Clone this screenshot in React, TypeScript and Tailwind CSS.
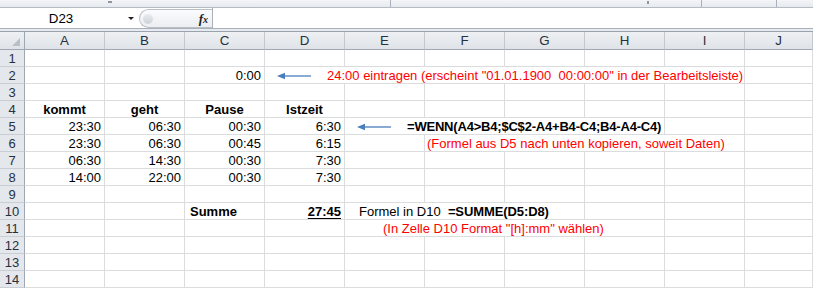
import React from "react";

const cols = ["A", "B", "C", "D", "E", "F", "G", "H", "I", "J"];

function Arrow({ className }: { className?: string }) {
  return (
    <svg width="34" height="8" viewBox="0 0 34 8" className={className}>
      <line x1="6" y1="4" x2="34" y2="4" stroke="#4a7ebb" strokeWidth="1.3" />
      <polygon points="0,4 8,0.8 8,7.2" fill="#4a7ebb" />
    </svg>
  );
}

type CellProps = {
  span?: number;
  align?: "left" | "right" | "center";
  className?: string;
  children?: React.ReactNode;
};

function Cell({ span = 1, align = "left", className = "", children }: CellProps) {
  const spanCls =
    span === 6 ? "col-span-6" : span === 4 ? "col-span-4" : span === 3 ? "col-span-3" : "col-span-1";
  const alignCls =
    align === "right" ? "justify-end pr-[3px]" : align === "center" ? "justify-center" : "justify-start";
  return (
    <div
      className={`${spanCls} ${alignCls} flex h-[17px] items-start whitespace-pre border-b border-r border-[#dadcdd] text-[13px] leading-[18px] ${className}`}
    >
      {children}
    </div>
  );
}

function RowHead({ n }: { n: number }) {
  return (
    <div className="flex h-[17px] justify-center border-b border-r border-b-[#c9ced5] border-r-[#9ea7b2] bg-[#e4e7eb] text-[13px] leading-[18px] text-[#27313d]">
      {n}
    </div>
  );
}

function Empty({ count }: { count: number }) {
  return (
    <>
      {Array.from({ length: count }).map((_, i) => (
        <Cell key={i} />
      ))}
    </>
  );
}

export default function App() {
  return (
    <div className="h-[290px] w-[816px] overflow-hidden bg-white font-['Liberation_Sans',Arial,sans-serif] text-black">
      {/* ribbon bottom strip */}
      <div className="flex h-[8px] w-[813px] border-b border-[#b4bbc5] bg-gradient-to-b from-[#f3f5f8] to-[#e6e9ee]">
        <div className="w-[108px]" />
        <div className="mt-[1px] h-[2px] w-[4px] bg-[#8d96a1]" />
        <div className="w-[278px]" />
        <div className="h-[7px] w-[1px] bg-[#aab1ba]" />
        <div className="w-[256px]" />
        <div className="mt-[1px] h-[3px] w-[2px] bg-[#8d96a1]" />
        <div className="w-[52px]" />
        <div className="h-[7px] w-[1px] bg-[#aab1ba]" />
        <div className="w-[74px]" />
        <div className="h-[7px] w-[1px] bg-[#aab1ba]" />
      </div>

      {/* formula bar */}
      <div className="flex h-[21px] w-[813px] border-b border-[#a9b0b9] bg-white">
        <div className="w-[122px] text-center text-[13.33px] leading-[21px] text-black">D23</div>
        <div className="flex w-[17px] items-center justify-start pl-[6px]">
          <div className="h-0 w-0 border-x-[3px] border-t-[3px] border-x-transparent border-t-[#222]" />
        </div>
        <div className="mt-[1px] flex h-[19px] w-[73px] items-center rounded-l-full border-y border-l border-[#b9bfc7] bg-gradient-to-b from-[#fbfbfc] to-[#eceef1]">
          <div className="ml-[3px] h-[10px] w-[10px] rounded-full bg-gradient-to-b from-[#e9ebee] to-[#cfd3d8]" />
          <div className="flex-1" />
          <span className="mr-[4px] font-['Liberation_Serif',serif] text-[13px] font-bold italic leading-none text-[#222]">
            f<span className="text-[10px]">x</span>
          </span>
        </div>
        <div className="flex-1 border-l border-[#a9b0b9] bg-white" />
      </div>
      <div className="h-[3px] w-[813px] border-b border-[#9aa3ad] bg-[#e8ebef]" />

      {/* sheet */}
      <div className="grid w-[813px] grid-cols-[25px_repeat(9,80px)_1fr]">
        {/* header row */}
        <div className="relative h-[18px] border-b border-r border-b-[#9ea7b2] border-r-[#9ea7b2] bg-gradient-to-b from-[#eef0f3] to-[#dfe3e8]">
          <div className="absolute bottom-[3px] right-[4px] h-0 w-0 border-b-[8px] border-l-[8px] border-b-[#b9bfc6] border-l-transparent" />
        </div>
        {cols.map((c) => (
          <div
            key={c}
            className="flex h-[18px] justify-center border-b border-r border-b-[#9ea7b2] border-r-[#c2c8cf] bg-gradient-to-b from-[#eef0f3] to-[#dfe3e8] text-[13.33px] leading-[18px] text-[#27313d]"
          >
            {c}
          </div>
        ))}

        {/* row 1 */}
        <RowHead n={1} />
        <Empty count={10} />

        {/* row 2 */}
        <RowHead n={2} />
        <Cell />
        <Cell />
        <Cell align="right">0:00</Cell>
        <Cell span={6}>
          <Arrow className="ml-[12px] mt-[5px] shrink-0" />
          <span className="ml-[16px] text-[#ff0000]">
            24:00 eintragen (erscheint "01.01.1900  00:00:00" in der Bearbeitsleiste)
          </span>
        </Cell>
        <Cell />

        {/* row 3 */}
        <RowHead n={3} />
        <Empty count={10} />

        {/* row 4 */}
        <RowHead n={4} />
        <Cell align="center">
          <span className="font-bold">kommt</span>
        </Cell>
        <Cell align="center">
          <span className="font-bold">geht</span>
        </Cell>
        <Cell align="center">
          <span className="font-bold">Pause</span>
        </Cell>
        <Cell align="center">
          <span className="font-bold">Istzeit</span>
        </Cell>
        <Empty count={6} />

        {/* row 5 */}
        <RowHead n={5} />
        <Cell align="right">23:30</Cell>
        <Cell align="right">06:30</Cell>
        <Cell align="right">00:30</Cell>
        <Cell align="right">6:30</Cell>
        <Cell span={4}>
          <Arrow className="ml-[12px] mt-[5px] shrink-0" />
          <span className="ml-[16px] font-bold tracking-[-0.2px]">=WENN(A4&gt;B4;$C$2-A4+B4-C4;B4-A4-C4)</span>
        </Cell>
        <Cell />
        <Cell />

        {/* row 6 */}
        <RowHead n={6} />
        <Cell align="right">23:30</Cell>
        <Cell align="right">06:30</Cell>
        <Cell align="right">00:45</Cell>
        <Cell align="right">6:15</Cell>
        <Cell />
        <Cell span={4}>
          <span className="pl-[2px] text-[#ff0000]">(Formel aus D5 nach unten kopieren, soweit Daten)</span>
        </Cell>
        <Cell />

        {/* row 7 */}
        <RowHead n={7} />
        <Cell align="right">06:30</Cell>
        <Cell align="right">14:30</Cell>
        <Cell align="right">00:30</Cell>
        <Cell align="right">7:30</Cell>
        <Empty count={6} />

        {/* row 8 */}
        <RowHead n={8} />
        <Cell align="right">14:00</Cell>
        <Cell align="right">22:00</Cell>
        <Cell align="right">00:30</Cell>
        <Cell align="right">7:30</Cell>
        <Empty count={6} />

        {/* row 9 */}
        <RowHead n={9} />
        <Empty count={10} />

        {/* row 10 */}
        <RowHead n={10} />
        <Cell />
        <Cell />
        <Cell>
          <span className="pl-[5px] font-bold">Summe</span>
        </Cell>
        <Cell align="right">
          <span className="font-bold underline underline-offset-2">27:45</span>
        </Cell>
        <Cell span={3}>
          <span className="pl-[14px]">
            {"Formel in D10  "}
            <span className="font-bold tracking-[-0.1px]">=SUMME(D5:D8)</span>
          </span>
        </Cell>
        <Empty count={3} />

        {/* row 11 */}
        <RowHead n={11} />
        <Empty count={4} />
        <Cell span={4}>
          <span className="pl-[38px] text-[#ff0000]">(In Zelle D10 Format "[h]:mm" wählen)</span>
        </Cell>
        <Empty count={2} />

        {/* rows 12-14 */}
        <RowHead n={12} />
        <Empty count={10} />
        <RowHead n={13} />
        <Empty count={10} />
        <RowHead n={14} />
        <Empty count={10} />
      </div>
    </div>
  );
}
